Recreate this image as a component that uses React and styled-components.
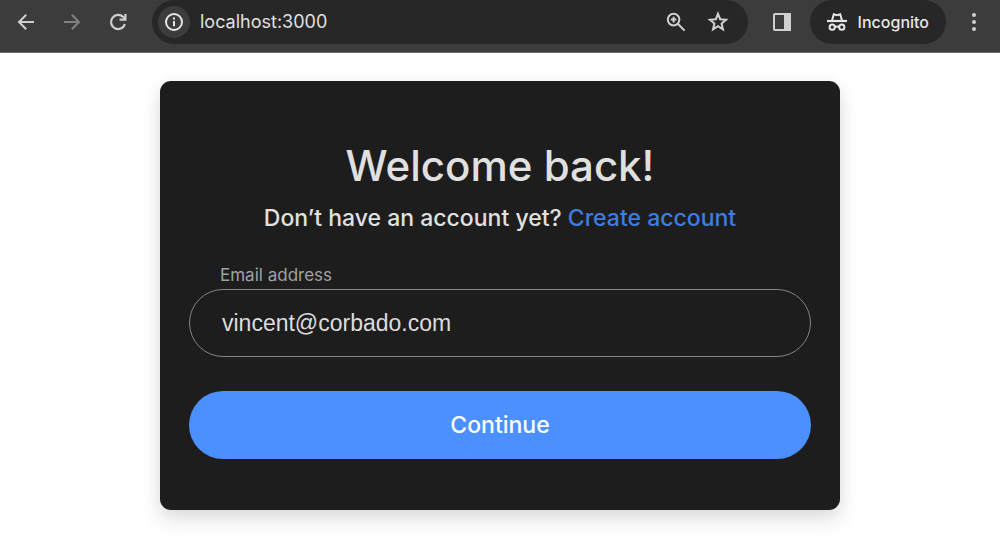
import React, { useState } from "react";
import styled, { createGlobalStyle } from "styled-components";

const GlobalStyle = createGlobalStyle`
  * { box-sizing: border-box; }
  body { margin: 0; background: #fff; font-family: Inter, "Liberation Sans", sans-serif; }
  button, input { font: inherit; margin: 0; }
`;

const Toolbar = styled.header`
  display: flex;
  align-items: flex-start;
  gap: 18px;
  padding: 0 10px 8px;
  background: #3c3c3c;
  border-bottom: 1px solid #6b6b6b;
`;

const ToolGroup = styled.div`
  display: flex;
  align-items: center;
  height: 44px;
  gap: ${(p) => p.$gap}px;
`;

const IconButton = styled.button`
  display: grid;
  place-items: center;
  flex: none;
  width: 32px;
  height: 32px;
  padding: 0;
  border: 0;
  border-radius: 50%;
  background: transparent;
  color: ${(p) => (p.disabled ? "#808080" : "#d0d0d0")};
`;

const AddressBar = styled.form`
  display: flex;
  align-items: center;
  flex: 1;
  min-width: 0;
  height: 44px;
  gap: 10px;
  padding: 0 14px 0 6px;
  border-radius: 22px;
  background: #272727;
`;

const SiteInfo = styled(IconButton)`
  background: #3c3c3c;
  color: #e6e6e6;
`;

const Url = styled.input`
  flex: 1;
  min-width: 0;
  padding: 0;
  border: 0;
  outline: 0;
  background: transparent;
  color: #e0e0e0;
  font-size: 18px;
  line-height: 24px;
`;

const Profile = styled.button`
  display: flex;
  align-items: center;
  height: 44px;
  gap: 11px;
  padding: 0 17px;
  border: 0;
  border-radius: 22px;
  background: #272727;
  color: #e6e6e6;
  font-size: 16px;
  font-weight: 500;
`;

const Page = styled.main`
  padding: 28px 16px;
`;

const Card = styled.section`
  max-width: 680px;
  margin: 0 auto;
  padding: 57px 29px 51px;
  border-radius: 11px;
  background: #1d1d1d;
  color: #e0e0e0;
  box-shadow: 0 10px 20px rgba(20, 30, 26, 0.13), 0 2px 14px rgba(0, 0, 0, 0.05);
`;

const Title = styled.h1`
  margin: 0;
  font-size: 42px;
  font-weight: 500;
  line-height: 56px;
  text-align: center;
`;

const Subtitle = styled.p`
  margin: 8px 0 29px;
  font-size: 23px;
  font-weight: 500;
  line-height: 32px;
  text-align: center;
`;

const Link = styled.a`
  color: #3d7de0;
  text-decoration: none;
`;

const Field = styled.div`
  display: flex;
  flex-direction: column;
  gap: 2px;
`;

const Label = styled.label`
  padding-left: 31px;
  color: #a2a2a2;
  font-size: 17px;
  line-height: 24px;
`;

const TextInput = styled.input`
  width: 100%;
  height: 68px;
  padding: 0 32px;
  border: 1px solid #858585;
  border-radius: 34px;
  outline: 0;
  background: transparent;
  color: #dcdcdc;
  font-family: "Liberation Sans", Arial, sans-serif;
  font-size: 23px;
`;

const Submit = styled.button`
  width: 100%;
  height: 68px;
  margin-top: 34px;
  border: 0;
  border-radius: 34px;
  background: #4c90ff;
  color: #fff;
  font-size: 23px;
  font-weight: 500;
`;

const Icon = ({ size = 20, width = 2, children }) => (
  <svg width={size} height={size} viewBox="0 0 20 20" fill="none" stroke="currentColor" strokeWidth={width} aria-hidden="true">
    {children}
  </svg>
);

const BackIcon = () => (
  <Icon><path d="M18 10H3.4M10.2 2.8 3 10l7.2 7.2" /></Icon>
);
const ForwardIcon = () => (
  <Icon><path d="M2 10h14.6M9.8 2.8 17 10l-7.2 7.2" /></Icon>
);
const ReloadIcon = () => (
  <Icon width={2.2}>
    <path d="M16.9 12.2A7.1 7.1 0 1 1 15.2 5L17.2 7" />
    <path d="M17.4 2v5.7h-5.8" />
  </Icon>
);
const InfoIcon = () => (
  <Icon>
    <circle cx="10" cy="10" r="8" />
    <path d="M10 9v5.2M10 5.6v2" />
  </Icon>
);
const ZoomIcon = () => (
  <Icon>
    <circle cx="7.6" cy="7.6" r="5.8" />
    <path d="m11.8 11.8 6.8 6.8M7.6 4.8v5.6M4.8 7.6h5.6" />
  </Icon>
);
const StarIcon = () => (
  <Icon size={24}>
    <path strokeWidth="1.7" d="m10 3.2 1.8 4.5 4.9.4-3.7 3.2 1.1 4.8-4.1-2.6-4.1 2.6 1.1-4.8-3.7-3.2 4.9-.4z" />
  </Icon>
);
const PanelIcon = () => (
  <Icon>
    <rect x="2" y="2" width="16" height="16" rx="1" />
    <path d="M13 2h5v16h-5z" fill="currentColor" />
  </Icon>
);
const IncognitoIcon = () => (
  <Icon>
    <path d="M0 9h20" strokeWidth="2.2" />
    <path d="M5 8.6 6.8 2.2 10 3.2l3.2-1 1.8 6.4" />
    <circle cx="5.2" cy="15.2" r="2.6" />
    <circle cx="14.8" cy="15.2" r="2.6" />
    <path d="M7.6 15q2.4-1 4.8 0" />
  </Icon>
);
const MenuIcon = () => (
  <Icon>
    <g fill="currentColor" stroke="none">
      <circle cx="10" cy="3" r="2" />
      <circle cx="10" cy="10" r="2" />
      <circle cx="10" cy="17" r="2" />
    </g>
  </Icon>
);

export default function App() {
  const [url, setUrl] = useState("localhost:3000");
  const [email, setEmail] = useState("vincent@corbado.com");
  const stay = (event) => event.preventDefault();

  return (
    <>
      <GlobalStyle />
      <Toolbar>
        <ToolGroup $gap={14}>
          <IconButton aria-label="Back"><BackIcon /></IconButton>
          <IconButton aria-label="Forward" disabled><ForwardIcon /></IconButton>
          <IconButton aria-label="Reload"><ReloadIcon /></IconButton>
        </ToolGroup>
        <AddressBar onSubmit={stay}>
          <SiteInfo type="button" aria-label="Site information"><InfoIcon /></SiteInfo>
          <Url aria-label="Address" value={url} onChange={(e) => setUrl(e.target.value)} />
          <IconButton type="button" aria-label="Zoom"><ZoomIcon /></IconButton>
          <IconButton type="button" aria-label="Bookmark"><StarIcon /></IconButton>
        </AddressBar>
        <ToolGroup $gap={12}>
          <IconButton aria-label="Side panel"><PanelIcon /></IconButton>
          <Profile><IncognitoIcon />Incognito</Profile>
          <IconButton aria-label="Menu"><MenuIcon /></IconButton>
        </ToolGroup>
      </Toolbar>
      <Page>
        <Card>
          <Title>Welcome back!</Title>
          <Subtitle>
            Don’t have an account yet? <Link href="#create">Create account</Link>
          </Subtitle>
          <form onSubmit={stay}>
            <Field>
              <Label htmlFor="email">Email address</Label>
              <TextInput id="email" type="email" value={email} onChange={(e) => setEmail(e.target.value)} />
            </Field>
            <Submit type="submit">Continue</Submit>
          </form>
        </Card>
      </Page>
    </>
  );
}
